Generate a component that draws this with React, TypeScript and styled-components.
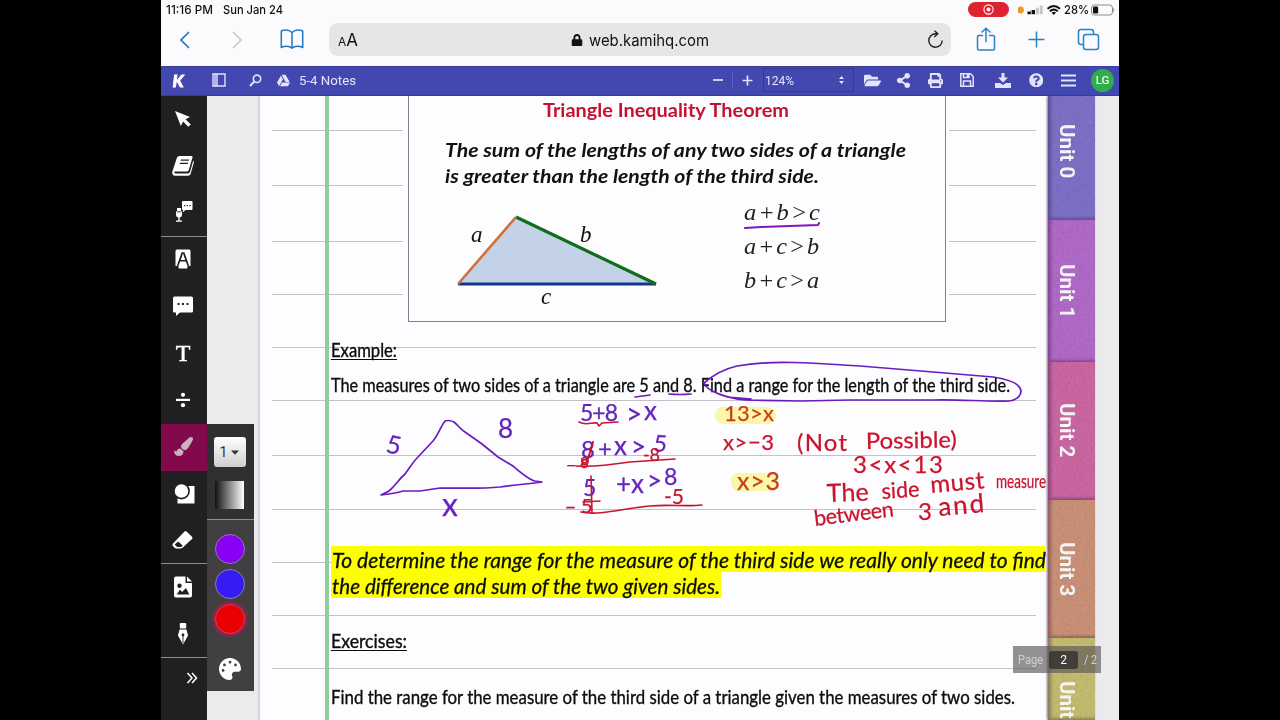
import React, { useLayoutEffect, useRef, useState } from "react";
import styled, { createGlobalStyle } from "styled-components";
import {
  FaFolderOpen,
  FaGoogleDrive,
  FaLock,
  FaPaintBrush,
  FaPalette,
  FaPrint,
  FaQuestionCircle,
  FaShareAlt,
} from "react-icons/fa";

const GlobalStyle = createGlobalStyle`
  * { box-sizing: border-box; }
  body { margin: 0; background: #000; overflow: hidden; }
  svg { display: block; flex: none; }
`;

const ui = '"Inter", "Liberation Sans", sans-serif';
const kami = '"Roboto", "Liberation Sans", sans-serif';
const note = '"Lato", "Liberation Sans", sans-serif';

/* ---------- text squeezed to a given width ---------- */

const FitBox = styled.span<{ $width: number }>`
  display: block;
  flex: none;
  width: ${(p) => p.$width}px;
  white-space: nowrap;
`;
const FitInner = styled.span`
  display: inline-block;
  transform-origin: left center;
`;

function Fit({ width, children }: { width: number; children: React.ReactNode }) {
  const ref = useRef<HTMLSpanElement>(null);
  const [scale, setScale] = useState(1);
  useLayoutEffect(() => {
    if (ref.current) setScale(width / ref.current.getBoundingClientRect().width);
  }, [width]);
  return (
    <FitBox $width={width}>
      <FitInner ref={ref} style={{ transform: `scaleX(${scale})` }}>
        {children}
      </FitInner>
    </FitBox>
  );
}

/* ---------- shell ---------- */

const Screen = styled.div`
  width: 1280px;
  height: 720px;
  display: flex;
  justify-content: center;
  background: #000;
  overflow: hidden;
`;
const Tablet = styled.div`
  width: 958px;
  height: 720px;
  display: flex;
  flex-direction: column;
  background: #fbfafc;
`;

/* ---------- status bar and browser bar ---------- */

const StatusBar = styled.div`
  height: 19px;
  padding: 0 4px 0 5px;
  display: flex;
  align-items: center;
  font: 500 12px ${ui};
  color: #111;
`;
const DateText = styled.div`
  margin-left: 10px;
`;
const StatusRight = styled.div`
  margin-left: auto;
  display: flex;
  align-items: center;
`;
const RecordPill = styled.div`
  width: 41px;
  height: 15px;
  border-radius: 8px;
  background: #dd2230;
  display: flex;
  align-items: center;
  justify-content: center;
  margin-right: 9px;
`;
const BrowserBar = styled.div`
  height: 47px;
  padding-top: 4px;
  display: flex;
  align-items: flex-start;
`;
const NavCell = styled.div<{ $width: number; $indent?: number }>`
  width: ${(p) => p.$width}px;
  height: 33px;
  padding-left: ${(p) => p.$indent ?? 0}px;
  flex: none;
  display: flex;
  align-items: center;
  justify-content: center;
`;
const AddressBar = styled.div`
  width: 622px;
  height: 33px;
  flex: none;
  border-radius: 9px;
  background: #e6e5e7;
  padding: 0 7px 0 9px;
  display: flex;
  align-items: center;
  justify-content: space-between;
  font: 400 16px ${ui};
  color: #111;
`;
const TextSize = styled.div`
  display: flex;
  align-items: baseline;
  font-size: 17px;
  width: 20px;
`;
const SmallA = styled.span`
  font-size: 12px;
`;
const Url = styled.div`
  display: flex;
  align-items: center;
  gap: 6px;
  padding-right: 5px;
`;

/* ---------- document toolbar ---------- */

const KamiBar = styled.div`
  height: 30px;
  padding-bottom: 2px;
  background: #4348b1;
  border-top: 1px solid #3a3f9c;
  border-bottom: 1px solid #3a3d8c;
  display: flex;
  align-items: center;
  color: #e4e3fa;
  font: 400 13px ${kami};
`;
const Cell = styled.div<{ $width: number; $rule?: boolean }>`
  width: ${(p) => p.$width}px;
  height: 16px;
  flex: none;
  display: flex;
  align-items: center;
  justify-content: center;
  border-right: ${(p) => (p.$rule ? "1px solid #5a5fc6" : "none")};
`;
const Logo = styled.span`
  font: italic 900 17px ${note};
  color: #fff;
  -webkit-text-stroke: 0.8px #fff;
`;
const Push = styled.div`
  flex: 1;
`;
const ZoomSelect = styled.div`
  width: 91px;
  height: 24px;
  margin: 0 6px 0 2px;
  padding: 0 9px 0 1px;
  border: 1px solid #34388f;
  display: flex;
  align-items: center;
  justify-content: space-between;
  font-size: 12.5px;
`;
const Avatar = styled.div`
  width: 23px;
  height: 23px;
  flex: none;
  border-radius: 50%;
  background: #2fae4c;
  color: #eafbe9;
  font: 500 11.5px/23px ${kami};
  text-align: center;
`;

/* ---------- work area ---------- */

const Work = styled.div`
  height: 624px;
  display: flex;
  position: relative;
  background: #ebeaed;
  overflow: hidden;
`;
const Tools = styled.div`
  width: 46px;
  flex: none;
  background: #211f22;
  color: #fff;
`;
const Tool = styled.div<{ $active?: boolean; $end?: boolean; $last?: boolean }>`
  height: 46.85px;
  display: flex;
  align-items: center;
  justify-content: center;
  padding-left: ${(p) => (p.$last ? "16px" : "0")};
  padding-right: ${(p) => (p.$last ? "0" : "2px")};
  padding-bottom: ${(p) => (p.$last ? "8px" : "1px")};
  color: ${(p) => (p.$active ? "#c9b3c1" : "#fff")};
  background: ${(p) => (p.$active ? "#820a4c" : "transparent")};
  border-bottom: ${(p) => (p.$end ? "1px solid #8f8d90" : "none")};
`;
const SerifT = styled.span`
  font: 400 24px "Liberation Serif", serif;
  -webkit-text-stroke: 0.5px #fff;
`;

const Flyout = styled.div`
  position: absolute;
  left: 46px;
  top: 328px;
  width: 47px;
  height: 267px;
  padding-right: 1px;
  background: #413f41;
  display: flex;
  flex-direction: column;
  align-items: center;
`;
const FlyoutTop = styled.div`
  width: 47px;
  height: 96px;
  flex: none;
  background: #312f31;
  border-bottom: 1px solid #8c8a8c;
  display: flex;
  flex-direction: column;
  align-items: center;
  padding-top: 13px;
  padding-right: 1px;
  gap: 14px;
`;
const SizeButton = styled.div`
  width: 32px;
  height: 30px;
  border-radius: 3px;
  background: linear-gradient(#fff, #cfcfcf);
  display: flex;
  align-items: center;
  justify-content: center;
  gap: 4px;
  font: 400 14px ${kami};
  color: #333;
`;
const Gradient = styled.div`
  width: 29px;
  height: 28px;
  background: linear-gradient(90deg, #111, #fff);
`;
const Swatches = styled.div`
  margin: 14px 0 24px;
  display: flex;
  flex-direction: column;
  gap: 5px;
`;
const Swatch = styled.div<{ $color: string; $on?: boolean }>`
  width: 30px;
  height: 30px;
  border-radius: 50%;
  background: ${(p) => p.$color};
  border: 1px solid ${(p) => (p.$on ? "#d8395c" : "#8b7fa8")};
  box-shadow: ${(p) => (p.$on ? "0 0 4px 1px #d0104e" : "none")};
`;

const Page = styled.div`
  width: 790px;
  height: 624px;
  margin-left: 51px;
  flex: none;
  position: relative;
  background: #fdfcfe;
  border-left: 2px solid #d5d4d8;
`;
const Rules = styled.div`
  position: absolute;
  left: 12px;
  top: 0;
  width: 764px;
`;
const Rule = styled.div<{ $gap: number }>`
  height: ${(p) => p.$gap}px;
  border-bottom: 1px solid #c3c2c5;
`;
const Margin = styled.div`
  position: absolute;
  left: 65px;
  top: 0;
  width: 4px;
  height: 624px;
  background: #8fce9b;
`;
const Content = styled.div`
  position: relative;
  padding-left: 71px;
  font-family: ${note};
  color: #0c0c0c;
`;
const CardMask = styled.div`
  margin-left: 72px;
  width: 546px;
  height: 230px;
  padding-left: 5px;
  background: #fdfcfe;
`;
const Card = styled.div`
  width: 538px;
  height: 226px;
  border: 1px solid #77808f;
  border-top: none;
  padding: 0 36px;
`;
const CardTitle = styled.div`
  height: 41px;
  padding-left: 98px;
  font: 700 19px/28px ${note};
  color: #c4122f;
`;
const CardText = styled.div`
  font: italic 700 19.5px/25.5px ${note};
  color: #111;
`;
const CardRow = styled.div`
  display: flex;
  gap: 79px;
  margin-top: 8px;
`;
const Formulas = styled.div`
  font: italic 400 23px/34px "Liberation Serif", serif;
  word-spacing: -4px;
  color: #222;
`;
const Underlined = styled.span`
  display: block;
  line-height: 17px;
  border-bottom: 1.5px solid #0c0c0c;
`;
const Heading = styled.div<{ $height: number }>`
  height: ${(p) => p.$height}px;
  display: flex;
  align-items: center;
  font-size: 18.5px;
  -webkit-text-stroke: 0.35px #0c0c0c;
`;
const Para = styled.div<{ $height: number }>`
  height: ${(p) => p.$height}px;
  display: flex;
  align-items: center;
  font-size: 19px;
  -webkit-text-stroke: 0.35px #0c0c0c;
`;
const Workings = styled.div`
  height: 152px;
`;
const Marked = styled.div<{ $width: number }>`
  width: ${(p) => p.$width}px;
  height: 26px;
  padding-left: 1px;
  background: #fdff00;
  font: italic 400 22px/27px ${note};
  -webkit-text-stroke: 0.3px #0c0c0c;
`;
const Ink = styled.svg`
  position: absolute;
  left: 98px;
  top: 0;
`;

const Tabs = styled.div`
  width: 47px;
  flex: none;
  position: relative;
  box-shadow: -1px 0 2px rgba(40, 20, 60, 0.6);
`;
const Tab = styled.div<{ $height: number; $color: string; $pad: number }>`
  width: 47px;
  height: ${(p) => p.$height}px;
  padding-top: ${(p) => p.$pad}px;
  display: flex;
  align-items: flex-start;
  padding-left: 8px;
  background: ${(p) => p.$color};
  box-shadow: inset 3px -2px 3px rgba(50, 20, 70, 0.35);
  color: #fff;
  font: 700 20.5px/22px ${kami};
  white-space: nowrap;
`;
const TabLabel = styled.span`
  writing-mode: vertical-rl;
`;
const Grain = styled.svg`
  position: absolute;
  left: 0;
  top: 0;
  opacity: 0.32;
  mix-blend-mode: multiply;
`;

const Pager = styled.div`
  position: absolute;
  left: 852px;
  top: 550px;
  width: 88px;
  height: 27px;
  padding: 0 4px 0 5px;
  background: rgba(88, 84, 88, 0.64);
  display: flex;
  align-items: center;
  justify-content: space-between;
  font: 400 12px ${kami};
  color: #d2d0d2;
`;
const PagerInput = styled.div`
  width: 29px;
  height: 18px;
  border-radius: 3px;
  background: rgba(50, 46, 48, 0.8);
  color: #fff;
  line-height: 18px;
  text-align: center;
`;

const RULES = [35, 55, 56, 53, 53, 53, 55, 54, 53, 53, 53];

const TABS = [
  { label: "Unit 0", height: 124, color: "#8073cc", pad: 28 },
  { label: "Unit 1", height: 142, color: "#b56ccd", pad: 44 },
  { label: "Unit 2", height: 138, color: "#d069a6", pad: 41 },
  { label: "Unit 3", height: 138, color: "#cf947a", pad: 42 },
  { label: "Unit", height: 82, color: "#c8c172", pad: 43 },
];

const PURPLE = "#6a1cc0";
const RED = "#c9142b";

type Word = [text: string, x: number, y: number, width: number, size: number, turn?: number];

const purpleWords: Word[] = [
  ["5", 385, 452, 14, 25, 12],
  ["8", 498, 438, 15, 26],
  ["x", 442, 516, 16, 32],
  ["5+8", 580, 421, 38, 23],
  [">", 626, 424, 13, 28],
  ["x", 644, 420, 14, 26],
  ["8", 581, 458, 12, 24],
  ["+", 598, 457, 13, 24],
  ["x", 614, 455, 13, 26],
  [">", 631, 456, 12, 26],
  ["5", 653, 451, 14, 23, 5],
  ["5", 583, 496, 12, 23],
  ["+x", 616, 493, 28, 26],
  [">", 647, 490, 12, 26],
  ["8", 664, 485, 13, 23],
];

const redWords: Word[] = [
  ["−", 566, 471, 9, 18],
  ["8", 580, 468, 10, 15],
  ["-8", 643, 461, 17, 18],
  ["−", 565, 514, 11, 19],
  ["5", 581, 513, 13, 20],
  ["-5", 664, 504, 20, 22],
  ["x>−3", 723, 450, 51, 22],
  ["(Not", 797, 451, 50, 24],
  ["Possible)", 866, 449, 91, 22.5, -1],
  ["3<x<13", 853, 473, 90, 24],
  ["The", 827, 502, 42, 25, -2],
  ["side", 882, 499, 38, 22, -4],
  ["must", 931, 493, 54, 24, -5],
  ["measure", 996, 488, 50, 20],
  ["between", 815, 526, 80, 21.5, -7],
  ["3", 918, 520, 11, 24],
  ["and", 939, 516, 46, 26, -5],
];

const orangeWords: Word[] = [
  ["13>x", 724, 421, 50, 22],
  ["x>3", 737, 490, 43, 25],
];

function Words({ list, color }: { list: Word[]; color: string }) {
  return (
    <g fill={color} stroke={color} strokeWidth={0.25} fontFamily={note}>
      {list.map(([text, x, y, width, size, turn = 0]) => {
        const tight = width < text.length * size * 0.46;
        return (
          <text
            key={`${text}${x}`}
            x={x}
            y={y}
            fontSize={size}
            textLength={text.length > 1 ? width : undefined}
            lengthAdjust={tight ? "spacingAndGlyphs" : "spacing"}
            transform={`rotate(${turn} ${x} ${y})`}
          >
            {text}
          </text>
        );
      })}
    </g>
  );
}

function InkLayer() {
  return (
    <Ink width="789" height="624" viewBox="259 96 789 624" fill="none" strokeLinecap="round" strokeLinejoin="round">
      <rect x="715" y="407" width="61" height="17" rx="8" fill="#fbf59a" opacity="0.85" />
      <rect x="731" y="473" width="46" height="18" rx="8" fill="#fbf59a" opacity="0.85" />
      <g stroke={PURPLE} strokeWidth="1.7">
        <path d="M745 228L761 227L790 226L818 225L819 223" stroke="#8016bd" strokeWidth="2" />
        <path d="M635 397q8 -1 15 -2M669 394q11 1 22 0" />
        <path d="M704 383C712 376 724 369 737 366C755 363 775 362 793 362.500C822 363 840 365 860 366L933 372L993 377C1006 379 1017 382 1020 388C1023 394 1018 400 1009 401C985 402 960 399 933 400L850 400L801 401L745 400C728 398 707 392 704 383M727 397L751 399" />
        <path d="M389 491C397 484 398 480 405 474C409 469 412 463 418 457L433 441C438 435 441 426 445 421C448 420 452 421 454 422C458 425 460 429 465 432L482 444L498 457L513 466C520 472 529 480 535 481L542 482C530 484 520 484 500 487C480 489 460 488 440 488L420 491L403 491C398 493 390 494 381 495L389 491" />
      </g>
      <Words list={purpleWords} color="#6424bd" />
      <Words list={redWords} color={RED} />
      <Words list={orangeWords} color="#c6401a" />
      <g stroke={RED} strokeWidth="1.6">
        <path d="M579 422C586 426 592 422 597 423L599 426L602 423L618 422" />
        <path d="M576 466C590 467 610 465 630 462L675 459" />
        <path d="M593 442L588 459M582 461q3 -3 6 0q0 4 -5 3z" strokeWidth="2" />
        <path d="M591 476L592 513M583 502L600 501M581 512C600 516 625 508 650 506C670 504 685 507 702 505" />
      </g>
    </Ink>
  );
}

function Glyph({ size = 24, children }: { size?: number; children: React.ReactNode }) {
  return (
    <svg width={size} height={size} viewBox="0 0 24 24" fill="currentColor">
      {children}
    </svg>
  );
}

function ToolRail() {
  return (
    <Tools>
      <Tool>
        <Glyph><path d="M4 4L19 10L14.5 12.2L19.8 17.4L17.3 19.8L12.2 14.6L9.8 19Z" /></Glyph>
      </Tool>
      <Tool>
        <Glyph>
          <path fillRule="evenodd" d="M8.5 2H20.5Q22 2 21.5 3.6L17.8 16Q17.3 17.5 15.8 17.5H4.2Q3 17.5 3.3 18.6Q3.6 19.6 5 19.6H17.2L18.8 18.6L22.3 6.6L23 8L19.6 20Q19 21.8 17 21.8H4Q.9 21.5 1.3 17.8L5.8 4Q6.5 2 8.5 2ZM10 5.5L9.6 6.8H17.8L18.2 5.5ZM9 8.7L8.6 10H16.8L17.2 8.7Z" />
        </Glyph>
      </Tool>
      <Tool $end>
        <Glyph>
          <path fillRule="evenodd" d="M12 1H20.5Q21.5 1 21.5 2V9Q21.5 10 20.5 10H14.5L12 12.3V10Q11 10 11 9V2Q11 1 12 1ZM13 5V6.2H14.2V5ZM15.7 5V6.2H16.9V5ZM18.4 5V6.2H19.6V5Z" />
          <path d="M6 8H10V11H11V15Q11 17 8.700 17.500V20.500H11V21.800H5V20.500H7.300V17.500Q5 17 5 15V11H6Z" />
          <path d="M5.600 11.800H10.400" stroke="#211f22" strokeWidth=".9" />
        </Glyph>
      </Tool>
      <Tool>
        <Glyph>
          <path d="M6 2.500H18Q19.500 2.500 19.500 4V19H18.200L13.400 5.200H10.600L5.800 19H4.500V4Q4.500 2.500 6 2.500Z" />
          <path d="M12 6.200L14.200 13H9.800ZM9.200 14.600H14.800L16.600 19Q16.600 21.500 15.600 21.500H8.400Q7.400 21.500 7.400 19Z" />
        </Glyph>
      </Tool>
      <Tool>
        <Glyph>
          <path fillRule="evenodd" d="M3.500 2.500H20.500Q22 2.500 22 4V17Q22 18.500 20.500 18.500H9L5 22V18.500H3.500Q2 18.500 2 17V4Q2 2.500 3.500 2.500ZM6.500 9V11H8.500V9ZM11 9V11H13V9ZM15.500 9V11H17.500V9Z" />
        </Glyph>
      </Tool>
      <Tool><SerifT>T</SerifT></Tool>
      <Tool>
        <Glyph>
          <rect x="5" y="10.800" width="14" height="2.200" />
          <circle cx="12" cy="6.800" r="2.100" />
          <circle cx="12" cy="17.200" r="2.100" />
        </Glyph>
      </Tool>
      <Tool $active><FaPaintBrush size={19} /></Tool>
      <Tool>
        <Glyph>
          <rect x="6.500" y="4" width="17" height="17.500" />
          <circle cx="10.500" cy="9" r="7.600" stroke="#211f22" strokeWidth="1.600" />
        </Glyph>
      </Tool>
      <Tool $end>
        <Glyph>
          <path d="M13.500 3.600Q14.700 2.600 15.800 3.700L21 8.700Q22.200 9.900 21 11L11.500 19.800Q10.500 20.600 9 20.600H5.500Q4.300 20.600 3.500 19.800L1.700 17.800Q.8 16.700 2 15.500Z" />
          <path d="M7.200 13.400L11.600 17.600L10.400 18.900H6.200L3.600 16.500Z" fill="#211f22" />
        </Glyph>
      </Tool>
      <Tool>
        <Glyph>
          <path d="M5 1.500H14.500V8H21V20.500Q21 22.500 19 22.500H5Q3 22.500 3 20.500V3.500Q3 1.500 5 1.500ZM16 1.500L21 6.500H16Z" />
          <circle cx="8.500" cy="10.800" r="2.200" fill="#211f22" />
          <path d="M5.800 19.500L9 14.500L11 17L15 13L18.300 19.500Z" fill="#211f22" />
        </Glyph>
      </Tool>
      <Tool $end>
        <Glyph>
          <rect x="8.800" y="1" width="6.400" height="5.400" rx="1" />
          <path d="M8.500 7.500H15.500L17 13.500L12 22.500L7 13.500Z" />
          <path d="M12 13.500V21" stroke="#211f22" strokeWidth=".9" />
          <circle cx="12" cy="13" r="1.400" fill="#211f22" />
        </Glyph>
      </Tool>
      <Tool $last>
        <svg width="12" height="12" viewBox="0 0 12 12" fill="none" stroke="#fff" strokeWidth="1.500">
          <path d="M1.500 1L6 6L1.500 11M6 1L10.500 6L6 11" />
        </svg>
      </Tool>
    </Tools>
  );
}

export default function App() {
  return (
    <Screen>
      <GlobalStyle />
      <Tablet>
        <StatusBar>
          <Fit width={47}>11:16 PM</Fit>
          <DateText><Fit width={60}>Sun Jan 24</Fit></DateText>
          <StatusRight>
            <RecordPill>
              <svg width="11" height="11" viewBox="0 0 11 11">
                <circle cx="5.5" cy="5.5" r="4.6" fill="none" stroke="#fff" strokeWidth="1.1" />
                <circle cx="5.5" cy="5.5" r="2" fill="#fff" />
              </svg>
            </RecordPill>
            <svg width="46" height="12" viewBox="1 0 46 12">
              <circle cx="3.500" cy="6" r="3.400" fill="#ee9a28" />
              <path d="M10.500 7.500h3.400v2.800h-3.400zM14.600 6h3.400v4.300h-3.400z" fill="#111" />
              <path d="M18.800 3.800h3v6.500h-3zM22.800 1.500h3v8.800h-3z" fill="#c6c5c8" />
              <g fill="none" stroke="#111" strokeWidth="1.900">
                <path d="M30.500 4.800Q36.800 -.8 43 4.800M32.800 7.200Q36.800 3.600 40.800 7.200" />
              </g>
              <path d="M34.600 8.500Q36.800 6.800 39 8.500L36.800 11Z" fill="#111" />
            </svg>
            <Fit width={25}>28%</Fit>
            <svg width="26" height="12" viewBox="0 0 26 12">
              <rect x="2.500" y="1" width="21" height="10" rx="3" fill="none" stroke="#8b8a8d" />
              <rect x="4" y="2.500" width="5.200" height="7" rx="1.300" fill="#111" />
              <path d="M24.700 4.500v3" stroke="#8b8a8d" />
            </svg>
          </StatusRight>
        </StatusBar>

        <BrowserBar>
          <NavCell $width={47}>
            <svg width="12" height="18" viewBox="0 0 12 18" fill="none" stroke="#2079c0" strokeWidth="1.700"><path d="M10 1L2 9L10 17" /></svg>
          </NavCell>
          <NavCell $width={57}>
            <svg width="12" height="18" viewBox="0 0 12 18" fill="none" stroke="#c8c7ca" strokeWidth="1.500"><path d="M2 1L10 9L2 17" /></svg>
          </NavCell>
          <NavCell $width={53}>
            <svg width="24" height="21" viewBox="0 0 24 21" fill="none" stroke="#2079c0" strokeWidth="1.500" strokeLinejoin="round">
              <path d="M12 3.500Q9.500 1 6 1Q3 1 1.300 2V18.500Q3.500 17.200 6.500 17.200Q10 17.200 12 19.200Q14 17.200 17.500 17.200Q20.500 17.200 22.700 18.500V2Q21 1 18 1Q14.500 1 12 3.500V19" />
            </svg>
          </NavCell>
          <NavCell $width={11} />
          <AddressBar>
            <TextSize><SmallA>A</SmallA>A</TextSize>
            <Url>
              <FaLock size={12} />
              <Fit width={120}>web.kamihq.com</Fit>
            </Url>
            <svg width="17" height="19" viewBox="0 0 17 19" fill="none" stroke="#222" strokeWidth="1.400">
              <path d="M10.500 3.800H8.600A6.700 6.700 0 1 0 15.200 10.500M7.500 .8L10.800 3.800L7.300 7.100" />
            </svg>
          </AddressBar>
          <NavCell $width={69}>
            <svg width="20" height="25" viewBox="0 0 20 25" fill="none" stroke="#2a83c4" strokeWidth="1.500" strokeLinecap="round">
              <path d="M6.500 8.500H3Q1.500 8.500 1.500 10V21.500Q1.500 23 3 23H17Q18.500 23 18.500 21.500V10Q18.500 8.500 17 8.500H13.500M10 14.500V1.500M6 5L10 1.300L14 5" />
            </svg>
          </NavCell>
          <NavCell $width={33}>
            <svg width="17" height="17" viewBox="0 0 17 17" stroke="#2a83c4" strokeWidth="1.500"><path d="M8.500 .5V16.500M.5 8.500H16.500" /></svg>
          </NavCell>
          <NavCell $width={66} $indent={5}>
            <svg width="23" height="23" viewBox="0 0 23 23" fill="none" stroke="#2a83c4" strokeWidth="1.500">
              <path d="M6.500 16.500H4Q1.500 16.500 1.500 14V4Q1.500 1.500 4 1.500H14Q16.500 1.500 16.500 4V6.500" />
              <rect x="6.500" y="6.500" width="15" height="15" rx="2.500" />
            </svg>
          </NavCell>
        </BrowserBar>

        <KamiBar>
          <Cell $width={34}><Logo>K</Logo></Cell>
          <Cell $width={48}>
            <svg width="14" height="14" viewBox="0 0 14 14" fill="none" stroke="currentColor" strokeWidth="1.400"><path d="M1 1H13V13H1ZM5 1V13M3 1V13" /></svg>
          </Cell>
          <Cell $width={25}>
            <svg width="13" height="13" viewBox="0 0 13 13" fill="none" stroke="currentColor"><circle cx="8" cy="4.800" r="3.700" strokeWidth="1.600" /><path d="M5.200 7.600L1 12" strokeWidth="2.100" /></svg>
          </Cell>
          <Cell $width={31}><FaGoogleDrive size={13} /></Cell>
          <Fit width={57}>5-4 Notes</Fit>
          <Push />
          <Cell $width={30} $rule>
            <svg width="10" height="10" viewBox="0 0 10 10" stroke="currentColor" strokeWidth="1.700"><path d="M0 5H10" /></svg>
          </Cell>
          <Cell $width={28}>
            <svg width="11" height="11" viewBox="0 0 11 11" stroke="currentColor" strokeWidth="1.700"><path d="M.5 5.500H10.500M5.500 .5V10.500" /></svg>
          </Cell>
          <ZoomSelect>
            <Fit width={29}>124%</Fit>
            <svg width="5" height="8" viewBox="0 0 5 8" fill="currentColor"><path d="M0 3L2.500 0L5 3ZM0 5L2.500 8L5 5Z" /></svg>
          </ZoomSelect>
          <Cell $width={24}><FaFolderOpen size={17} /></Cell>
          <Cell $width={38}><FaShareAlt size={15} /></Cell>
          <Cell $width={27}><FaPrint size={15} /></Cell>
          <Cell $width={36}>
            <svg width="14" height="14" viewBox="0 0 14 14" fill="none" stroke="currentColor" strokeWidth="1.500"><path d="M.8 .8H10.500L13.200 3.500V13.200H.8ZM3.500 13V8H10.500V13M3.500 1V4.500H9V1M7.500 1V4" /></svg>
          </Cell>
          <Cell $width={36}>
            <svg width="16" height="15" viewBox="0 0 16 15" fill="currentColor"><path d="M6.500 0H9.500V4.500H13L8 9.500L3 4.500H6.500ZM0 10H5L8 12L11 10H16V15H0Z" /></svg>
          </Cell>
          <Cell $width={30}><FaQuestionCircle size={14.500} /></Cell>
          <Cell $width={35}>
            <svg width="15" height="13" viewBox="0 0 15 13" stroke="currentColor" strokeWidth="2"><path d="M0 1.500H15M0 6.500H15M0 11.500H15" /></svg>
          </Cell>
          <Cell $width={33}><Avatar>LG</Avatar></Cell>
        </KamiBar>

        <Work>
          <ToolRail />
          <Page>
            <Rules>{RULES.map((gap, i) => <Rule key={i} $gap={gap} />)}</Rules>
            <Margin />
            <Content>
              <CardMask>
                <Card>
                  <CardTitle><Fit width={246}>Triangle Inequality Theorem</Fit></CardTitle>
                  <CardText>
                    <Fit width={461}>The sum of the lengths of any two sides of a triangle</Fit>
                    <Fit width={374}>is greater than the length of the third side.</Fit>
                  </CardText>
                  <CardRow>
                    <svg width="220" height="118" viewBox="445 196 220 118">
                      <path d="M516 217L656 284H458Z" fill="#c3d2e6" />
                      <path d="M458 284H656" stroke="#12378c" strokeWidth="3.200" />
                      <path d="M516 217L656 284" stroke="#0e6e1c" strokeWidth="3.200" />
                      <path d="M458 284L516 217" stroke="#d0703c" strokeWidth="2.600" />
                      <g fontFamily="Liberation Serif, serif" fontStyle="italic" fontSize="23" fill="#111">
                        <text x="471" y="242">a</text>
                        <text x="580" y="242">b</text>
                        <text x="541" y="304">c</text>
                      </g>
                    </svg>
                    <Formulas>
                      <Fit width={76}>a + b &gt; c</Fit>
                      <Fit width={75}>a + c &gt; b</Fit>
                      <Fit width={75}>b + c &gt; a</Fit>
                    </Formulas>
                  </CardRow>
                </Card>
              </CardMask>
              <Heading $height={49}><Underlined><Fit width={66}>Example:</Fit></Underlined></Heading>
              <Para $height={19}>
                <Fit width={679}>The measures of two sides of a triangle are 5 and 8. Find a range for the length of the third side.</Fit>
              </Para>
              <Workings />
              <Marked $width={714}><Fit width={714}>To determine the range for the measure of the third side we really only need to find</Fit></Marked>
              <Marked $width={390}><Fit width={388}>the difference and sum of the two given sides.</Fit></Marked>
              <Heading $height={88}><Underlined><Fit width={76}>Exercises:</Fit></Underlined></Heading>
              <Para $height={20}>
                <Fit width={684}>Find the range for the measure of the third side of a triangle given the measures of two sides.</Fit>
              </Para>
            </Content>
          </Page>
          <Tabs>
            {TABS.map((t) => (
              <Tab key={t.label} $height={t.height} $color={t.color} $pad={t.pad}>
                <TabLabel>{t.label}</TabLabel>
              </Tab>
            ))}
            <Grain width="47" height="624">
              <filter id="grain">
                <feTurbulence type="fractalNoise" baseFrequency="0.35" numOctaves="2" />
                <feColorMatrix type="saturate" values="0" />
              </filter>
              <rect width="47" height="624" filter="url(#grain)" />
            </Grain>
          </Tabs>
          <InkLayer />
          <Flyout>
            <FlyoutTop>
              <SizeButton>
                1
                <svg width="8" height="5" viewBox="0 0 8 5" fill="#333"><path d="M0 .5H8L4 4.800Z" /></svg>
              </SizeButton>
              <Gradient />
            </FlyoutTop>
            <Swatches>
              <Swatch $color="#8a00f5" />
              <Swatch $color="#361bf4" />
              <Swatch $color="#e90000" $on />
            </Swatches>
            <FaPalette size={22} color="#fff" />
          </Flyout>
          <Pager>
            <Fit width={25}>Page</Fit>
            <PagerInput>2</PagerInput>
            <Fit width={13}>/ 2</Fit>
          </Pager>
        </Work>
      </Tablet>
    </Screen>
  );
}
